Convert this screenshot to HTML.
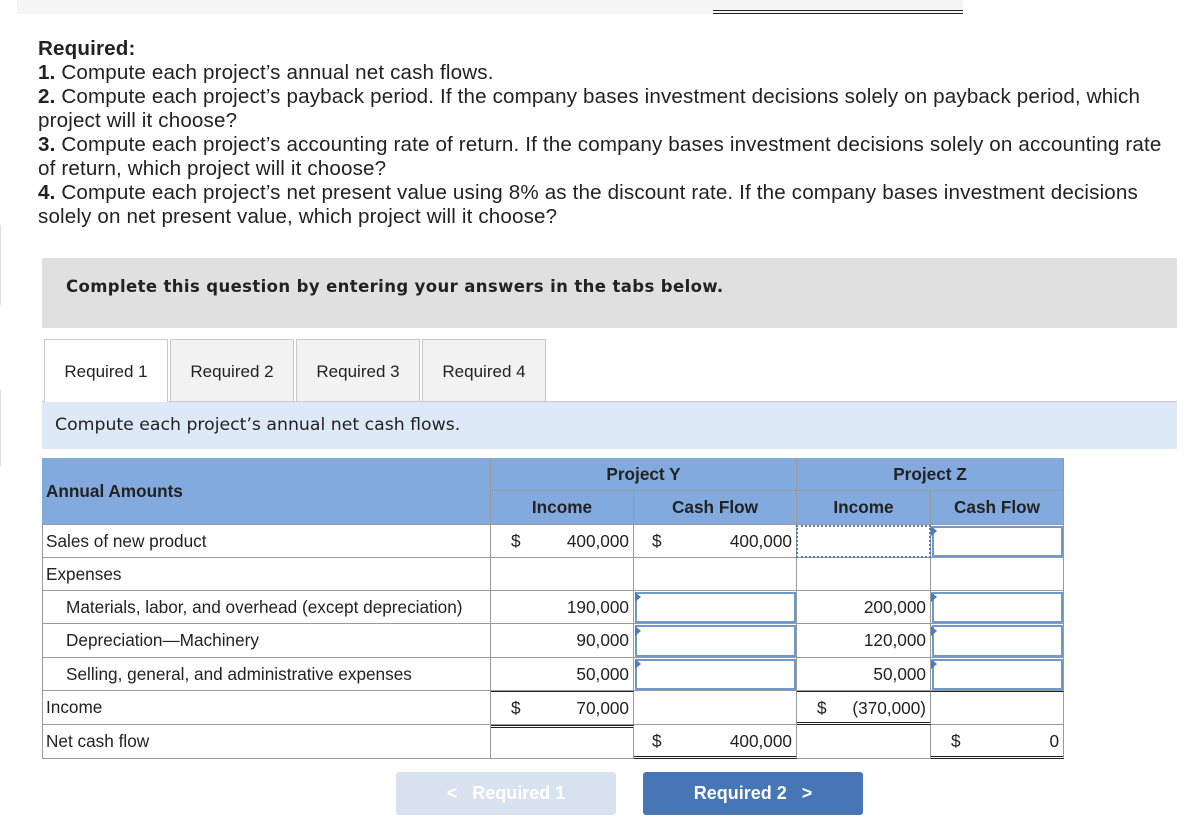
<!DOCTYPE html>
<html><head><style>
body{margin:0;width:1184px;height:818px;position:relative;background:#fff;font-family:"Liberation Sans",Arial,sans-serif;color:#222;overflow:hidden}
.a{position:absolute}
.req{left:38px;font-size:20.6px;line-height:24px;width:1146px;letter-spacing:0.15px}
.tab{position:absolute;top:339px;height:62px;border:1px solid #c8c8c8;border-bottom:none;background:#f2f2f2;font-size:17px;line-height:63px;text-align:center;box-sizing:border-box}
.c{position:absolute;border-right:1px solid #9a9a9a;border-bottom:1px solid #9a9a9a;box-sizing:border-box;font-size:17.2px;line-height:33px;padding:0 4px;white-space:nowrap}
.h{background:#82aadf;font-weight:bold;color:#222;text-align:center}
.r{text-align:right}
.inp{position:absolute;border:2px solid #6f99cc;box-sizing:border-box;background:#fff}
.tri{position:absolute;width:0;height:0;border-top:5px solid transparent;border-bottom:5px solid transparent;border-left:6px solid #4a7dc0}
</style></head><body>
<div class="a" style="left:17px;top:0;width:946px;height:14px;background:#f5f5f5"></div>
<div class="a" style="left:713px;top:10px;width:250px;height:1px;background:#222"></div>
<div class="a" style="left:713px;top:13px;width:250px;height:1px;background:#222"></div>
<div class="a" style="left:0;top:225px;width:1px;height:80px;background:#ddd"></div>
<div class="a" style="left:0;top:390px;width:1px;height:76px;background:#ddd"></div>

<div class="a req" style="top:37px;font-weight:bold">Required:</div>
<div class="a req" style="top:61px"><b>1.</b> Compute each project’s annual net cash flows.</div>
<div class="a req" style="top:85px"><b>2.</b> Compute each project’s payback period. If the company bases investment decisions solely on payback period, which<br>project will it choose?</div>
<div class="a req" style="top:133px"><b>3.</b> Compute each project’s accounting rate of return. If the company bases investment decisions solely on accounting rate<br>of return, which project will it choose?</div>
<div class="a req" style="top:181px"><b>4.</b> Compute each project’s net present value using 8% as the discount rate. If the company bases investment decisions<br>solely on net present value, which project will it choose?</div>

<div class="a" style="left:42px;top:258px;width:1135px;height:70px;background:#e0e0e0"></div>
<div class="a" style="left:66px;top:277px;font-weight:bold;font-family:'DejaVu Sans',sans-serif;letter-spacing:0.38px;font-size:16.5px">Complete this question by entering your answers in the tabs below.</div>

<div class="a" style="left:42px;top:401px;width:1135px;height:48px;background:#dde9f6"></div>
<div class="a" style="left:42px;top:401px;width:1135px;height:1px;background:#c8c8c8"></div>
<div class="tab" style="left:44px;width:124px;background:#fff;height:63px">Required 1</div>
<div class="tab" style="left:170px;width:124px">Required 2</div>
<div class="tab" style="left:296px;width:124px">Required 3</div>
<div class="tab" style="left:422px;width:124px">Required 4</div>
<div class="a" style="left:55px;top:415px;font-family:'DejaVu Sans',sans-serif;font-size:17.3px">Compute each project’s annual net cash flows.</div>

<!-- table -->
<div class="a" style="left:42px;top:458px;width:1022px;height:301px;border-top:1px solid #9a9a9a;border-left:1px solid #9a9a9a;box-sizing:border-box"></div>
<div class="c h" style="left:42px;top:458px;width:449px;height:67px;line-height:66px;text-align:left;background:#82aadf">Annual Amounts</div>
<div class="c h" style="left:491px;top:458px;width:306px;height:33px">Project Y</div>
<div class="c h" style="left:797px;top:458px;width:267px;height:33px">Project Z</div>
<div class="c h" style="left:491px;top:491px;width:143px;height:34px">Income</div>
<div class="c h" style="left:634px;top:491px;width:163px;height:34px">Cash Flow</div>
<div class="c h" style="left:797px;top:491px;width:134px;height:34px">Income</div>
<div class="c h" style="left:931px;top:491px;width:133px;height:34px">Cash Flow</div>

<!-- rows -->
<div class="c" style="left:42px;top:525px;width:449px;height:33px">Sales of new product</div>
<div class="c" style="left:42px;top:558px;width:449px;height:33px">Expenses</div>
<div class="c" style="left:42px;top:591px;width:449px;height:33px;padding-left:24px">Materials, labor, and overhead (except depreciation)</div>
<div class="c" style="left:42px;top:624px;width:449px;height:34px;padding-left:24px">Depreciation—Machinery</div>
<div class="c" style="left:42px;top:658px;width:449px;height:33px;padding-left:24px">Selling, general, and administrative expenses</div>
<div class="c" style="left:42px;top:691px;width:449px;height:34px">Income</div>
<div class="c" style="left:42px;top:725px;width:449px;height:34px">Net cash flow</div>

<!-- col Y income -->
<div class="c r" style="left:491px;top:525px;width:143px;height:33px"><span style="float:left;padding-left:16px">$</span>400,000</div>
<div class="c" style="left:491px;top:558px;width:143px;height:33px"></div>
<div class="c r" style="left:491px;top:591px;width:143px;height:33px">190,000</div>
<div class="c r" style="left:491px;top:624px;width:143px;height:34px">90,000</div>
<div class="c r" style="left:491px;top:658px;width:143px;height:33px">50,000</div>
<div class="c r" style="left:491px;top:691px;width:143px;height:34px;border-top:1px solid #222"><span style="float:left;padding-left:16px">$</span>70,000</div>
<div class="c" style="left:491px;top:725px;width:143px;height:34px;border-top:3px double #222"></div>

<!-- col Y cash -->
<div class="c r" style="left:634px;top:525px;width:163px;height:33px"><span style="float:left;padding-left:14px">$</span>400,000</div>
<div class="c" style="left:634px;top:558px;width:163px;height:33px"></div>
<div class="c" style="left:634px;top:591px;width:163px;height:33px"></div>
<div class="c" style="left:634px;top:624px;width:163px;height:34px"></div>
<div class="c" style="left:634px;top:658px;width:163px;height:33px"></div>
<div class="c" style="left:634px;top:691px;width:163px;height:34px"></div>
<div class="c r" style="left:634px;top:725px;width:163px;height:34px;border-bottom:3px double #222"><span style="float:left;padding-left:14px">$</span>400,000</div>
<div class="inp" style="left:635px;top:592px;width:161px;height:31px"></div>
<div class="inp" style="left:635px;top:625px;width:161px;height:32px"></div>
<div class="inp" style="left:635px;top:659px;width:161px;height:31px"></div>
<div class="tri" style="left:635px;top:592px"></div>
<div class="tri" style="left:635px;top:626px"></div>
<div class="tri" style="left:635px;top:659px"></div>

<!-- col Z income -->
<div class="c" style="left:797px;top:525px;width:134px;height:33px"></div>
<div class="a" style="left:796px;top:525px;width:135px;height:33px;border:2px dotted #4a7dc0;box-sizing:border-box"></div>
<div class="c" style="left:797px;top:558px;width:134px;height:33px"></div>
<div class="c r" style="left:797px;top:591px;width:134px;height:33px">200,000</div>
<div class="c r" style="left:797px;top:624px;width:134px;height:34px">120,000</div>
<div class="c r" style="left:797px;top:658px;width:134px;height:33px">50,000</div>
<div class="c r" style="left:797px;top:691px;width:134px;height:34px;border-top:1px solid #222;border-bottom:3px double #222"><span style="float:left;padding-left:16px">$</span>(370,000)</div>
<div class="c" style="left:797px;top:725px;width:134px;height:34px"></div>

<!-- col Z cash -->
<div class="c" style="left:931px;top:525px;width:133px;height:33px"></div>
<div class="c" style="left:931px;top:558px;width:133px;height:33px"></div>
<div class="c" style="left:931px;top:591px;width:133px;height:33px"></div>
<div class="c" style="left:931px;top:624px;width:133px;height:34px"></div>
<div class="c" style="left:931px;top:658px;width:133px;height:33px"></div>
<div class="c" style="left:931px;top:691px;width:133px;height:34px;border-top:1px solid #222"></div>
<div class="c r" style="left:931px;top:725px;width:133px;height:34px;border-bottom:3px double #222"><span style="float:left;padding-left:16px">$</span>0</div>
<div class="inp" style="left:932px;top:526px;width:131px;height:31px"></div>
<div class="inp" style="left:932px;top:592px;width:131px;height:31px"></div>
<div class="inp" style="left:932px;top:625px;width:131px;height:32px"></div>
<div class="inp" style="left:932px;top:659px;width:131px;height:31px"></div>
<div class="tri" style="left:931px;top:526px"></div>
<div class="tri" style="left:931px;top:592px"></div>
<div class="tri" style="left:931px;top:626px"></div>
<div class="tri" style="left:931px;top:659px"></div>

<!-- buttons -->
<div class="a" style="left:396px;top:772px;width:220px;height:43px;background:#d9e2ef;border-radius:3px;color:#fff;font-weight:bold;font-size:18px;line-height:43px;text-align:center">&lt;&nbsp;&nbsp;&nbsp;Required 1</div>
<div class="a" style="left:643px;top:772px;width:220px;height:43px;background:#4776b6;border-radius:3px;color:#fff;font-weight:bold;font-size:18px;line-height:43px;text-align:center">Required 2&nbsp;&nbsp;&nbsp;&gt;</div>
</body></html>
